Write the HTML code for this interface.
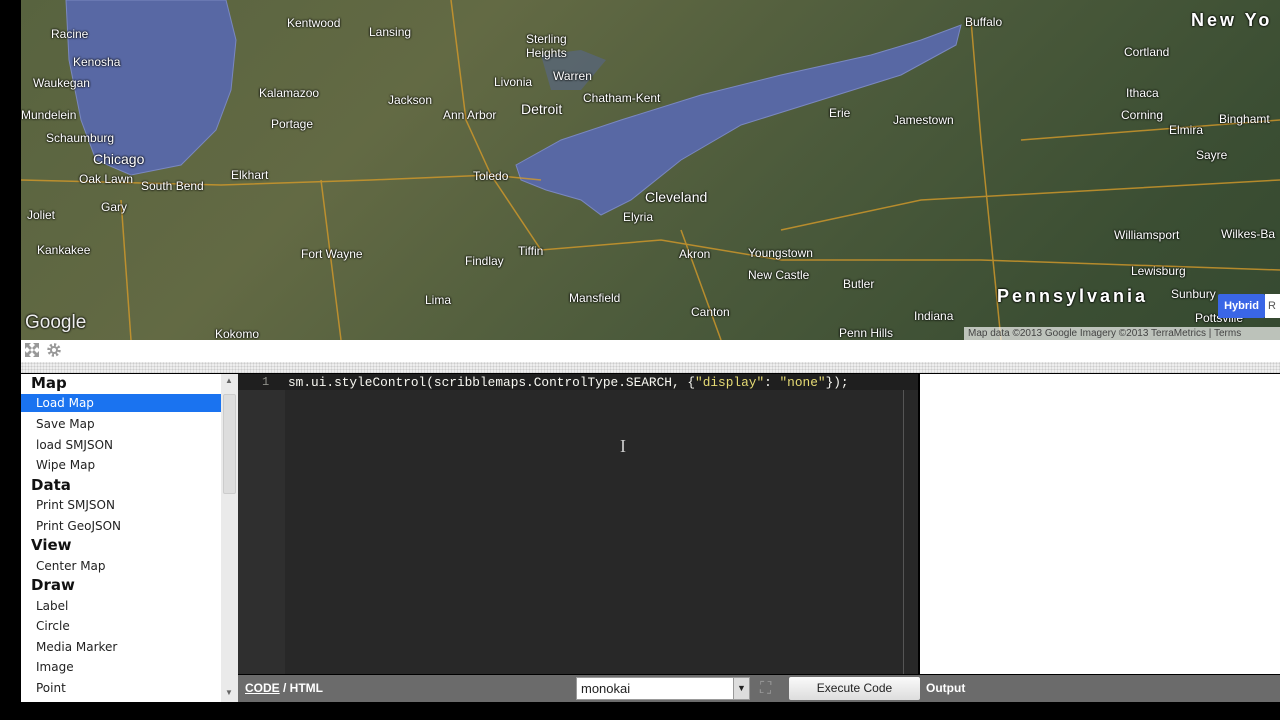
<!DOCTYPE html>
<html><head><style>
*{margin:0;padding:0;box-sizing:border-box}
body{width:1280px;height:720px;background:#000;position:relative;overflow:hidden;font-family:"Liberation Sans",sans-serif}
.abs{position:absolute}
#map{left:21px;top:0;width:1259px;height:340px;background:linear-gradient(135deg,#58633f 0%,#636a44 30%,#4b5a3b 60%,#3b4e33 85%,#364a31 100%);overflow:hidden}
.lbl{position:absolute;color:#fff;font-size:12px;text-shadow:0 0 2px #000,0 0 2px #000;white-space:nowrap}
.big{font-size:14px}
#bar{left:21px;top:340px;width:1259px;height:22px;background:#fff}
#dots{left:21px;top:362px;width:1259px;height:11px;background:#eee;background-image:radial-gradient(#ccc 1px,transparent 1px);background-size:3px 3px}
#list{left:21px;top:374px;width:200px;height:328px;background:#fff;font-family:"DejaVu Sans",sans-serif}
#list .h{font-weight:bold;font-size:15px;color:#111;padding-left:10px;height:19.5px;line-height:19px}
#list .i{font-size:12px;color:#222;padding-left:15px;height:20.5px;line-height:20px}
#list .sel{background:#1a73f0;color:#fff;height:18px;line-height:18px;margin-bottom:2.5px}
#sb{left:221px;top:374px;width:17px;height:328px;background:#eaeaea}
#ed{left:238px;top:374px;width:680px;height:300px;background:#282828}
#gut{left:238px;top:374px;width:47px;height:300px;background:#2f2f2f}
#out{left:920px;top:374px;width:360px;height:300px;background:#fff}
#bot{left:238px;top:675px;width:1042px;height:27px;background:#6b6b6b}
</style></head><body>
<div id="map" class="abs">
<svg width="1259" height="340" style="position:absolute;left:0;top:0">
<path d="M45,0 L205,0 L215,40 L210,90 L195,130 L160,165 L110,175 L75,160 L60,120 L48,60 Z" fill="#5868a4" stroke="#7a88c0"/>
<path d="M495,165 L540,140 L600,120 L680,95 L760,75 L850,55 L900,40 L940,25 L935,45 L880,75 L800,100 L720,125 L660,160 L610,200 L580,215 L560,200 L525,190 L500,180 Z" fill="#5868a4" stroke="#7a88c0"/>
<path d="M520,55 L560,50 L585,60 L560,90 L530,90 Z" fill="#56658a" opacity=".6"/>
<g stroke="#d49a2a" stroke-width="1.5" fill="none" opacity=".8">
<path d="M0,180 L200,185 L350,180 L470,175 L520,180"/><path d="M470,175 L520,250 L640,240 L760,260 L960,260 L1259,270"/>
<path d="M430,0 L445,120 L470,175"/><path d="M100,200 L110,340"/><path d="M660,230 L700,340"/><path d="M950,20 L960,140 L980,340"/>
<path d="M300,180 L320,340"/><path d="M1000,140 L1259,120"/><path d="M760,230 L900,200 L1259,180"/>
</g>
</svg>
<span class="lbl" style="left:30px;top:27px">Racine</span>
<span class="lbl" style="left:52px;top:55px">Kenosha</span>
<span class="lbl" style="left:12px;top:76px">Waukegan</span>
<span class="lbl" style="left:0;top:108px">Mundelein</span>
<span class="lbl" style="left:25px;top:131px">Schaumburg</span>
<span class="lbl big" style="left:72px;top:151px">Chicago</span>
<span class="lbl" style="left:58px;top:172px">Oak Lawn</span>
<span class="lbl" style="left:80px;top:200px">Gary</span>
<span class="lbl" style="left:6px;top:208px">Joliet</span>
<span class="lbl" style="left:16px;top:243px">Kankakee</span>
<span class="lbl" style="left:120px;top:179px">South Bend</span>
<span class="lbl" style="left:210px;top:168px">Elkhart</span>
<span class="lbl" style="left:266px;top:16px">Kentwood</span>
<span class="lbl" style="left:348px;top:25px">Lansing</span>
<span class="lbl" style="left:238px;top:86px">Kalamazoo</span>
<span class="lbl" style="left:250px;top:117px">Portage</span>
<span class="lbl" style="left:367px;top:93px">Jackson</span>
<span class="lbl" style="left:422px;top:108px">Ann Arbor</span>
<span class="lbl big" style="left:500px;top:101px">Detroit</span>
<span class="lbl" style="left:505px;top:32px">Sterling<br>Heights</span>
<span class="lbl" style="left:473px;top:75px">Livonia</span>
<span class="lbl" style="left:532px;top:69px">Warren</span>
<span class="lbl" style="left:562px;top:91px">Chatham-Kent</span>
<span class="lbl" style="left:452px;top:169px">Toledo</span>
<span class="lbl big" style="left:624px;top:189px">Cleveland</span>
<span class="lbl" style="left:602px;top:210px">Elyria</span>
<span class="lbl" style="left:658px;top:247px">Akron</span>
<span class="lbl" style="left:727px;top:246px">Youngstown</span>
<span class="lbl" style="left:727px;top:268px">New Castle</span>
<span class="lbl" style="left:808px;top:106px">Erie</span>
<span class="lbl" style="left:872px;top:113px">Jamestown</span>
<span class="lbl" style="left:944px;top:15px">Buffalo</span>
<span class="lbl" style="left:280px;top:247px">Fort Wayne</span>
<span class="lbl" style="left:444px;top:254px">Findlay</span>
<span class="lbl" style="left:497px;top:244px">Tiffin</span>
<span class="lbl" style="left:404px;top:293px">Lima</span>
<span class="lbl" style="left:548px;top:291px">Mansfield</span>
<span class="lbl" style="left:670px;top:305px">Canton</span>
<span class="lbl" style="left:822px;top:277px">Butler</span>
<span class="lbl" style="left:893px;top:309px">Indiana</span>
<span class="lbl" style="left:818px;top:326px">Penn Hills</span>
<span class="lbl" style="left:194px;top:327px">Kokomo</span>
<span class="lbl" style="left:1103px;top:45px">Cortland</span>
<span class="lbl" style="left:1105px;top:86px">Ithaca</span>
<span class="lbl" style="left:1100px;top:108px">Corning</span>
<span class="lbl" style="left:1148px;top:123px">Elmira</span>
<span class="lbl" style="left:1175px;top:148px">Sayre</span>
<span class="lbl" style="left:1198px;top:112px">Binghamt</span>
<span class="lbl" style="left:1093px;top:228px">Williamsport</span>
<span class="lbl" style="left:1200px;top:227px">Wilkes-Ba</span>
<span class="lbl" style="left:1110px;top:264px">Lewisburg</span>
<span class="lbl" style="left:1150px;top:287px">Sunbury</span>
<span class="lbl" style="left:1174px;top:311px">Pottsville</span>
<span class="lbl" style="left:1170px;top:10px;font-size:18px;letter-spacing:3px;font-weight:bold">New Yo</span>
<span class="lbl" style="left:976px;top:286px;font-size:18px;letter-spacing:3px;font-weight:bold">Pennsylvania</span>
<span class="lbl" style="left:4px;top:312px;font-size:19px;color:#eee">Google</span>
<div class="abs" style="left:943px;top:327px;width:316px;height:13px;background:rgba(245,245,245,.7);font-size:10px;color:#444;line-height:13px;padding-left:4px">Map data ©2013 Google Imagery ©2013 TerraMetrics | Terms</div>
<div class="abs" style="left:1197px;top:294px;width:47px;height:24px;background:#3a66e6;color:#fff;font-size:11px;font-weight:bold;line-height:24px;text-align:center;border-radius:2px">Hybrid</div>
<div class="abs" style="left:1244px;top:294px;width:15px;height:24px;background:#fff;font-size:11px;color:#555;line-height:24px;padding-left:3px">R</div>
</div>
<div id="bar" class="abs">
<svg width="40" height="20" style="position:absolute;left:3px;top:2px"><g fill="#999"><path d="M1,1 L7,1 L5,3 L8,6 L6,8 L3,5 L1,7Z"/><path d="M15,1 L9,1 L11,3 L8,6 L10,8 L13,5 L15,7Z"/><path d="M1,15 L7,15 L5,13 L8,10 L6,8 L3,11 L1,9Z"/><path d="M15,15 L9,15 L11,13 L8,10 L10,8 L13,11 L15,9Z"/></g><circle cx="30" cy="8" r="5" fill="none" stroke="#999" stroke-width="3.5" stroke-dasharray="2 1.9"/><circle cx="30" cy="8" r="4" fill="#999"/><circle cx="30" cy="8" r="2" fill="#fff"/></svg>
</div>
<div id="dots" class="abs"></div>
<div id="list" class="abs">
<div class="h">Map</div>
<div class="i sel">Load Map</div>
<div class="i">Save Map</div>
<div class="i">load SMJSON</div>
<div class="i">Wipe Map</div>
<div class="h">Data</div>
<div class="i">Print SMJSON</div>
<div class="i">Print GeoJSON</div>
<div class="h">View</div>
<div class="i">Center Map</div>
<div class="h">Draw</div>
<div class="i">Label</div>
<div class="i">Circle</div>
<div class="i">Media Marker</div>
<div class="i">Image</div>
<div class="i">Point</div>
</div>
<div id="sb" class="abs"><div style="position:absolute;left:2px;top:20px;width:13px;height:100px;background:#ddd;border:1px solid #ccc;border-radius:2px"></div><div style="position:absolute;left:4px;top:2px;font-size:8px;color:#666">▲</div><div style="position:absolute;left:4px;top:314px;font-size:8px;color:#666">▼</div></div>
<div id="ed" class="abs"></div>
<div id="gut" class="abs"></div>
<div class="abs" style="left:238px;top:374px;width:680px;height:16px;background:#1f1f1f"></div>
<div class="abs" style="left:903px;top:390px;width:1px;height:284px;background:#555"></div>
<div class="abs" style="left:262px;top:375px;font-family:'Liberation Mono',monospace;font-size:12px;color:#8f908a">1</div>
<div class="abs" style="left:288px;top:375px;font-family:'Liberation Mono',monospace;font-size:12.8px;color:#f8f8f2;white-space:pre">sm.ui.styleControl(scribblemaps.ControlType.SEARCH, {<span style="color:#e6db74">"display"</span>: <span style="color:#e6db74">"none"</span>});</div>
<div class="abs" style="left:620px;top:436px;color:#ccc;font-size:18px;font-family:'Liberation Serif',serif">I</div>
<div id="out" class="abs"></div>
<div id="bot" class="abs">
<span class="abs" style="left:7px;top:6px;font-size:12px;font-weight:bold;color:#fff"><u>CODE</u> / HTML</span>
<div class="abs" style="left:338px;top:2px;width:174px;height:23px;background:#fff;border:1px solid #999;font-size:13px;line-height:21px;padding-left:4px;color:#222">monokai<div style="position:absolute;right:0;top:0;width:16px;height:21px;background:#ddd;border-left:1px solid #999;font-size:9px;text-align:center;line-height:21px">▼</div></div>
<div class="abs" style="left:522px;top:3px;width:22px;height:21px;color:#999;font-size:16px;line-height:21px">⛶</div>
<div class="abs" style="left:551px;top:2px;width:131px;height:23px;background:linear-gradient(#fafafa,#ddd);border-radius:2px;font-size:12px;text-align:center;line-height:23px;color:#222">Execute Code</div>
<span class="abs" style="left:688px;top:6px;font-size:12px;font-weight:bold;color:#fff">Output</span>
</div>
</body></html>
